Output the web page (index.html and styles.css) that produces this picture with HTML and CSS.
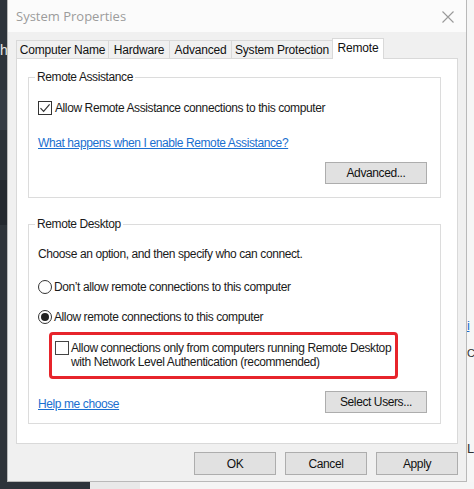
FILE: index.html
```html
<!DOCTYPE html>
<html>
<head>
<meta charset="utf-8">
<link rel="stylesheet" href="styles.css">
</head>
<body>
<div class="screen">
  <div class="top">
    <div class="left-strip"><span class="lh">h</span></div>
    <div class="dialog">
      <div class="titlebar">
        <span class="title">System Properties</span>
        <svg class="close" width="12" height="12" viewBox="0 0 12 12"><path d="M0.5 0.5 L11.5 11.5 M11.5 0.5 L0.5 11.5" stroke="#9a9a9a" stroke-width="1.1" fill="none"/></svg>
      </div>
      <div class="body">
        <div class="tabs">
          <div class="tab t1">Computer Name</div>
          <div class="tab t2">Hardware</div>
          <div class="tab t3">Advanced</div>
          <div class="tab t4">System Protection</div>
          <div class="tab t5 active">Remote</div>
        </div>
        <div class="panel">
          <fieldset class="group ra">
            <legend>Remote Assistance</legend>
            <div class="row check-row">
              <span class="checkbox"><svg width="12" height="12" viewBox="0 0 12 12"><path d="M1.5 6.2 L4.6 9.3 L10.6 2.3" stroke="#333" stroke-width="1.2" fill="none"/></svg></span>
              <span>Allow Remote Assistance connections to this computer</span>
            </div>
            <a class="link link1">What happens when I enable Remote Assistance?</a>
            <div class="btn-row"><div class="btn">Advanced...</div></div>
          </fieldset>
          <fieldset class="group rd">
            <legend>Remote Desktop</legend>
            <div class="choose">Choose an option, and then specify who can connect.</div>
            <div class="row radio-row r1"><span class="radio"></span><span>Don’t allow remote connections to this computer</span></div>
            <div class="row radio-row r2"><span class="radio on"><span class="dot"></span></span><span>Allow remote connections to this computer</span></div>
            <div class="redbox">
              <span class="checkbox"></span>
              <span class="nla">Allow connections only from computers running Remote Desktop<br>with Network Level Authentication (recommended)</span>
            </div>
            <div class="help-row">
              <a class="link">Help me choose</a>
              <div class="btn">Select Users...</div>
            </div>
          </fieldset>
        </div>
        <div class="footer">
          <div class="btn fbtn">OK</div>
          <div class="btn fbtn">Cancel</div>
          <div class="btn fbtn">Apply</div>
        </div>
      </div>
    </div>
    <div class="right-strip">
      <span class="ri">i</span>
      <span class="rc">C</span>
      <span class="rl">L</span>
    </div>
  </div>
  <div class="bottom">
    <div class="bdark"></div>
    <div class="bmid"></div>
    <div class="blight"></div>
  </div>
</div>
</body>
</html>
```
FILE: styles.css
```css
* { box-sizing: border-box; }
html, body { margin: 0; padding: 0; }
body {
  width: 474px;
  height: 489px;
  overflow: hidden;
  font-family: "Liberation Sans", Arial, sans-serif;
  font-size: 12px;
  letter-spacing: -0.4px;
  color: #1a1a1a;
  background: #f4f4f4;
}
.screen { width: 474px; height: 489px; display: flex; flex-direction: column; }
.top { display: flex; height: 482px; }
.left-strip {
  width: 7px;
  background: linear-gradient(#2e343b 0, #2e343b 90px, #353c44 90px, #353c44 130px, #2c3238 130px, #2c3238 180px, #23282e 180px, #23282e 225px, #2d3339 225px);
  position: relative;
  overflow: hidden;
}
.lh { position: absolute; left: 0px; top: 42px; color: #e8e8e8; font-size: 14px; letter-spacing: 0; }
.dialog {
  width: 460px;
  display: flex;
  flex-direction: column;
  border: 1px solid #b9b9b9;
  border-top: none;
  background: #f0f0f0;
  box-shadow: 0 2px 6px rgba(0,0,0,0.25);
}
.titlebar {
  height: 32px;
  background: #fbfbfb;
  display: flex;
  align-items: center;
  padding: 0 12px 0 8px;
}
.title { color: #9c9c9c; font-size: 13px; letter-spacing: 0; font-family: "Open Sans", "Liberation Sans", sans-serif; flex: 1; }
.close { display: block; margin-top: 1px; }
.body { flex: 1; display: flex; flex-direction: column; padding: 6px 8px 0 8px; }
.tabs { display: flex; height: 20px; align-items: flex-end; }
.tab {
  height: 18px;
  border: 1px solid #d9d9d9;
  border-bottom: none;
  border-right: none;
  background: #f0f0f0;
  display: flex;
  align-items: center;
  justify-content: center;
  color: #111;
  font-size: 12px;
  letter-spacing: -0.2px;
  white-space: nowrap;
}
.t1 { width: 92px; }
.t2 { width: 61px; }
.t3 { width: 62px; }
.t4 { width: 101px; }
.t5 { width: 52px; }
.tab.active {
  height: 21px;
  background: #fff;
  border-right: 1px solid #d9d9d9;
  margin-bottom: -1px;
  align-items: flex-start;
  padding-top: 2px;
  position: relative;
  z-index: 1;
}
.panel {
  height: 386px;
  width: 442px;
  background: #fff;
  border: 1px solid #d9d9d9;
  padding: 11px 11px 0 11px;
  display: flex;
  flex-direction: column;
}
.group {
  margin: 0;
  border: 1px solid #dcdcdc;
  padding: 0 13px 0 9px;
  width: 413px;
}
.group legend {
  padding: 0 2px 0 2px;
  margin-left: -3px;
  font-size: 12px;
  color: #1a1a1a;
}
.ra { height: 128px; flex: none; }
.rd { height: 207px; margin-top: 19px; flex: none; }
.row { display: flex; align-items: center; white-space: nowrap; }
.check-row { margin-top: 17px; }
.checkbox {
  width: 14px; height: 14px;
  border: 1px solid #333;
  background: #fff;
  display: inline-flex;
  align-items: center; justify-content: center;
  margin-right: 3px;
  flex: none;
}
.link {
  display: block;
  color: #1a6fd0;
  text-decoration: underline;
  white-space: nowrap;
}
.link1 { margin-top: 21px; }
.btn-row { display: flex; justify-content: flex-end; margin-top: 12px; }
.btn {
  width: 102px;
  height: 22px;
  background: #e1e1e1;
  border: 1px solid #adadad;
  display: flex; align-items: center; justify-content: center;
  color: #111;
}
.choose { margin-top: 16px; }
.radio {
  width: 14px; height: 14px;
  border: 1px solid #333;
  border-radius: 50%;
  background: #fff;
  margin-right: 2px;
  display: inline-flex; align-items: center; justify-content: center;
  flex: none;
}
.radio .dot { width: 8px; height: 8px; border-radius: 50%; background: #222; }
.r1 { margin-top: 19px; }
.r2 { margin-top: 16px; }
.redbox {
  margin-top: 8px;
  margin-left: 11px;
  width: 349px;
  height: 47px;
  flex: none;
  border: 3px solid #e7242b;
  border-radius: 4px;
  display: flex;
  align-items: flex-start;
  padding: 6px 0 0 3px;
}
.redbox .checkbox { border-color: #444; margin-right: 2px; }
.nla { line-height: 14px; white-space: nowrap; }
.help-row { display: flex; justify-content: space-between; align-items: center; margin-top: 12px; }
.help-row .link { margin-top: 4px; }
.footer { display: flex; justify-content: flex-end; gap: 9px; padding-top: 8px; }
.fbtn { width: 82px; height: 23px; }
.right-strip { flex: 1; position: relative; background: #f6f6f6; overflow: hidden; }
.ri { position: absolute; left: 0px; top: 318px; color: #1a6fd0; font-size: 13px; text-decoration: underline; }
.rc { position: absolute; left: 0px; top: 347px; color: #333; font-size: 11px; }
.rl { position: absolute; left: 0px; top: 441px; color: #333; font-size: 13px; }
.bottom { display: flex; height: 7px; }
.bdark { width: 90px; background: #2d333a; }
.bmid { width: 50px; background: #e9e9e9; }
.blight { flex: 1; background: #f5f5f5; }
```
